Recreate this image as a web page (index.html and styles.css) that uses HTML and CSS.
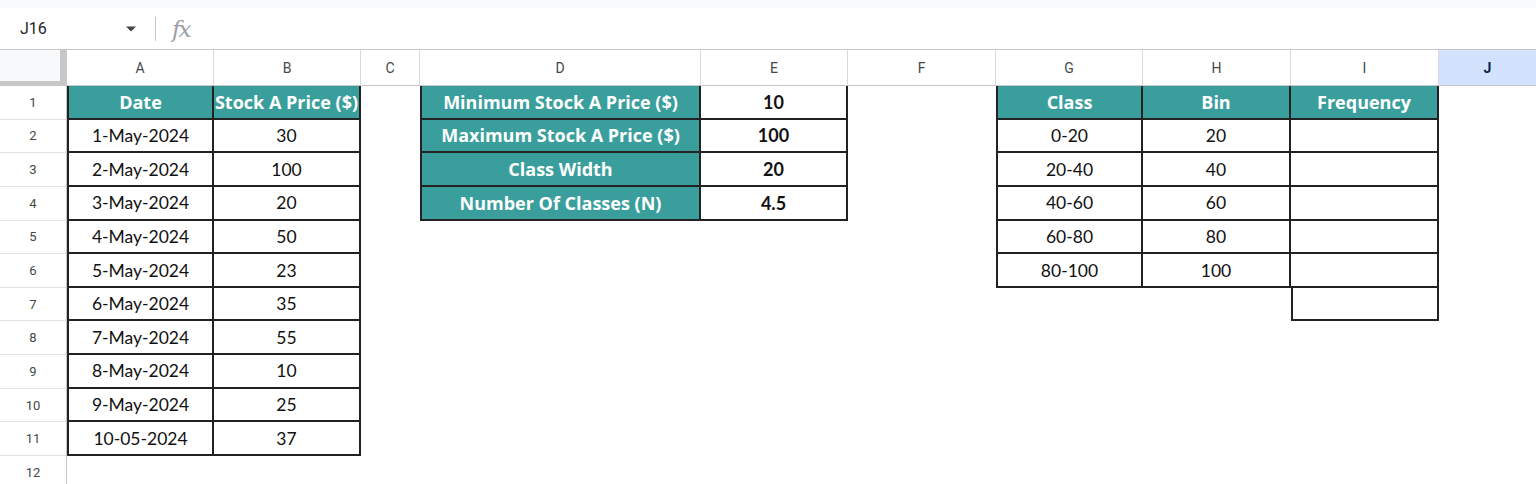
FILE: index.html
```html
<!DOCTYPE html>
<html>
<head>
<meta charset="utf-8">
<link rel="stylesheet" href="styles.css">
</head>
<body>
<div class="topstrip"></div>
<div class="fbar">
  <div class="namebox">J16</div>
  <svg class="caret" width="12" height="8" viewBox="0 0 12 8"><path d="M1 1.5h10L6 6.5z" fill="#444"/></svg>
  <div class="sep"></div>
  <div class="fx">fx</div>
</div>
<div class="sheet">
  <div class="corner"></div>
  <div class="ch">A</div><div class="ch">B</div><div class="ch">C</div><div class="ch">D</div><div class="ch">E</div><div class="ch">F</div><div class="ch">G</div><div class="ch">H</div><div class="ch">I</div><div class="ch sel">J</div>

  <div class="rh">1</div>
  <div class="c t b bl">Date</div><div class="c t b">Stock A Price ($)</div><div class="c"></div>
  <div class="c t b bl">Minimum Stock A Price ($)</div><div class="c b k">10</div><div class="c"></div>
  <div class="c t b bl">Class</div><div class="c t b">Bin</div><div class="c t b">Frequency</div><div class="c"></div>

  <div class="rh">2</div>
  <div class="c b bl">1-May-2024</div><div class="c b">30</div><div class="c"></div>
  <div class="c t b bl">Maximum Stock A Price ($)</div><div class="c b k">100</div><div class="c"></div>
  <div class="c b bl">0-20</div><div class="c b">20</div><div class="c b"></div><div class="c"></div>

  <div class="rh">3</div>
  <div class="c b bl">2-May-2024</div><div class="c b">100</div><div class="c"></div>
  <div class="c t b bl">Class Width</div><div class="c b k">20</div><div class="c"></div>
  <div class="c b bl">20-40</div><div class="c b">40</div><div class="c b"></div><div class="c"></div>

  <div class="rh">4</div>
  <div class="c b bl">3-May-2024</div><div class="c b">20</div><div class="c"></div>
  <div class="c t b bl">Number Of Classes (N)</div><div class="c b k">4.5</div><div class="c"></div>
  <div class="c b bl">40-60</div><div class="c b">60</div><div class="c b"></div><div class="c"></div>

  <div class="rh">5</div>
  <div class="c b bl">4-May-2024</div><div class="c b">50</div><div class="c"></div>
  <div class="c"></div><div class="c"></div><div class="c"></div>
  <div class="c b bl">60-80</div><div class="c b">80</div><div class="c b"></div><div class="c"></div>

  <div class="rh">6</div>
  <div class="c b bl">5-May-2024</div><div class="c b">23</div><div class="c"></div>
  <div class="c"></div><div class="c"></div><div class="c"></div>
  <div class="c b bl">80-100</div><div class="c b">100</div><div class="c b"></div><div class="c"></div>

  <div class="rh">7</div>
  <div class="c b bl">6-May-2024</div><div class="c b">35</div><div class="c"></div>
  <div class="c"></div><div class="c"></div><div class="c"></div>
  <div class="c"></div><div class="c"></div><div class="c b bl"></div><div class="c"></div>

  <div class="rh">8</div>
  <div class="c b bl">7-May-2024</div><div class="c b">55</div><div class="c"></div>
  <div class="c"></div><div class="c"></div><div class="c"></div>
  <div class="c"></div><div class="c"></div><div class="c"></div><div class="c"></div>

  <div class="rh">9</div>
  <div class="c b bl">8-May-2024</div><div class="c b">10</div><div class="c"></div>
  <div class="c"></div><div class="c"></div><div class="c"></div>
  <div class="c"></div><div class="c"></div><div class="c"></div><div class="c"></div>

  <div class="rh">10</div>
  <div class="c b bl">9-May-2024</div><div class="c b">25</div><div class="c"></div>
  <div class="c"></div><div class="c"></div><div class="c"></div>
  <div class="c"></div><div class="c"></div><div class="c"></div><div class="c"></div>

  <div class="rh">11</div>
  <div class="c b bl">10-05-2024</div><div class="c b">37</div><div class="c"></div>
  <div class="c"></div><div class="c"></div><div class="c"></div>
  <div class="c"></div><div class="c"></div><div class="c"></div><div class="c"></div>

  <div class="rh">12</div>
  <div class="c"></div><div class="c"></div><div class="c"></div>
  <div class="c"></div><div class="c"></div><div class="c"></div>
  <div class="c"></div><div class="c"></div><div class="c"></div><div class="c"></div>
</div>
</body>
</html>
```
FILE: styles.css
```css
* { box-sizing: border-box; }
html, body { margin: 0; padding: 0; background: #fff; overflow: hidden; }
body { width: 1536px; height: 484px; font-family: "Lato", "Open Sans", sans-serif; }

.topstrip { height: 8px; background: #f9fbfd; }

.fbar {
  height: 42px;
  display: flex;
  align-items: center;
  border-bottom: 1px solid #c4c7c5;
  background: #fff;
}
.namebox {
  font-family: Roboto, "Liberation Sans", sans-serif;
  font-size: 16px;
  color: #1f1f1f;
  width: 125px;
  padding-left: 20px;
}
.caret { margin-right: 18px; }
.sep { width: 1px; height: 24px; background: #c7c7c7; margin-right: 16px; }
.fx {
  font-family: "DejaVu Serif", "Liberation Serif", serif;
  font-style: italic;
  font-size: 23px;
  color: #9aa0a6;
  letter-spacing: -2px;
}

.sheet {
  display: grid;
  grid-template-columns: 67px 147px 147px 59px 281px 147px 148px 147px 148px 148px 1fr;
  grid-template-rows: 36px repeat(12, 33.65px);
}

.corner {
  background: #f8f9fa;
  border-right: 7px solid #c7c7c7;
  border-bottom: 5px solid #c7c7c7;
}
.ch {
  display: flex;
  align-items: center;
  justify-content: center;
  font-family: Roboto, "Liberation Sans", sans-serif;
  font-size: 14px;
  color: #444746;
  border-right: 1px solid #d9d9d9;
  border-bottom: 1px solid #c4c7c5;
  background: #fff;
}
.ch.sel {
  background: #d3e3fd;
  color: #0b1f4b;
  font-weight: 700;
  border-right: none;
}
.rh {
  display: flex;
  align-items: center;
  justify-content: center;
  font-family: Roboto, "Liberation Sans", sans-serif;
  font-size: 13px;
  color: #444746;
  border-right: 1px solid #c4c7c5;
  border-bottom: 1px solid #e1e1e1;
  background: #fff;
}

.c {
  display: flex;
  align-items: center;
  justify-content: center;
  font-size: 17.5px;
  color: #111;
  white-space: nowrap;
  overflow: hidden;
}
.b { border-right: 2px solid #222; border-bottom: 2px solid #222; }
.bl { border-left: 2px solid #222; }
.t {
  background: #3a9f9c;
  color: #fff;
  font-family: "Open Sans", "Lato", sans-serif;
  font-weight: 700;
  font-size: 18px;
}
.k { font-weight: 700; font-size: 18px; }
```
